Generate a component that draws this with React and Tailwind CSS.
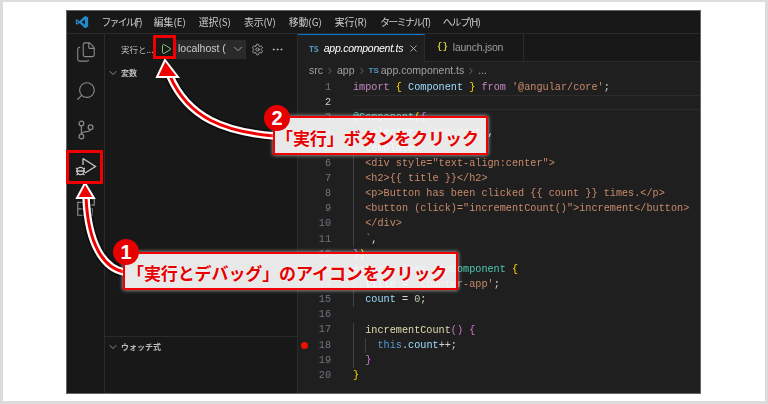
import { Files, Search, Settings, Ellipsis, ChevronDown, ChevronRight, Play, X } from 'lucide-react';

const MENU = [
  ['ファイル(F)', 'tracking-[-1.700px]'],
  ['編集(E)', ''],
  ['選択(S)', ''],
  ['表示(V)', ''],
  ['移動(G)', ''],
  ['実行(R)', ''],
  ['ターミナル(T)', 'tracking-[-1.500px]'],
  ['ヘルプ(H)', 'tracking-[-1.000px]'],
];

const P = 'text-[#c586c0]';
const G = 'text-[#ffd700]';
const V = 'text-[#9cdcfe]';
const B = 'text-[#569cd6]';
const S = 'text-[#c98a6b]';
const F = 'text-[#dcdcaa]';
const W = 'text-[#d4d4d4]';
const C = 'text-[#4ec9b0]';
const N = 'text-[#b5cea8]';
const O = 'text-[#da70d6]';

// n: line number, g: indent guides, t: [class, text] tokens
const CODE = [
  { n: 1, g: 0, t: [[P, 'import'], [W, ' '], [G, '{'], [V, ' Component '], [G, '}'], [P, ' from '], [S, "'@angular/core'"], [W, ';']] },
  { n: 2, g: 0, t: [], active: true },
  { n: 3, g: 0, t: [[C, '@Component'], [G, '('], [O, '{']] },
  { n: 4, g: 1, t: [[V, "selector"], [W, ': '], [S, "'app-root'"], [W, ',']] },
  { n: 5, g: 1, t: [[V, 'template'], [W, ': '], [S, '`']] },
  { n: 6, g: 1, t: [[S, '<div style="text-align:center">']] },
  { n: 7, g: 1, t: [[S, '<h2>{{ title }}</h2>']] },
  { n: 8, g: 1, t: [[S, '<p>Button has been clicked {{ count }} times.</p>']] },
  { n: 9, g: 1, t: [[S, '<button (click)="incrementCount()">increment</button>']] },
  { n: 10, g: 1, t: [[S, '</div>']] },
  { n: 11, g: 1, t: [[S, '`'], [W, ',']] },
  { n: 12, g: 0, t: [[O, '}'], [G, ')']] },
  { n: 13, g: 0, t: [[P, 'export'], [B, ' class '], [C, 'AppComponent '], [G, '{']] },
  { n: 14, g: 1, t: [[V, 'title'], [W, ' = '], [S, "'Counter-app'"], [W, ';']] },
  { n: 15, g: 1, t: [[V, 'count'], [W, ' = '], [N, '0'], [W, ';']] },
  { n: 16, g: 0, t: [] },
  { n: 17, g: 1, t: [[F, 'incrementCount'], [O, '()'], [W, ' '], [O, '{']] },
  { n: 18, g: 2, t: [[B, 'this'], [W, '.'], [V, 'count'], [W, '++;']], bp: true },
  { n: 19, g: 1, t: [[O, '}']] },
  { n: 20, g: 0, t: [[G, '}']] },
];

function VsLogo() {
  return (
    <svg viewBox="0 0 24 24" className="w-[14px] h-[14px] shrink-0" fill="#2489ca">
      <path d="M17 1.500 22.500 4v16L17 22.500 7.500 13.500 3.500 16.700 1.500 15.700V8.300l2-1 4 3.200L17 1.500Zm0 6L11.500 12l5.500 4.500v-9ZM3.500 9.800v4.400L5.700 12 3.500 9.800Z" />
    </svg>
  );
}

function GitIcon() {
  return (
    <svg viewBox="0 0 24 24" className="w-[22px] h-[22px]" fill="none" stroke="#8a8a8a" strokeWidth="1.300">
      <circle cx="7" cy="5" r="2.600" />
      <circle cx="17" cy="9" r="2.600" />
      <circle cx="7" cy="19" r="2.600" />
      <path d="M7 7.600v8.800M17 11.600c0 3-10 1.500-10 4.800" />
    </svg>
  );
}

function RunDebugIcon() {
  return (
    <svg viewBox="0 0 24 24" className="w-[24px] h-[24px]" fill="none" stroke="#c8c8c8" strokeWidth="1.300">
      <path d="M9 3.500 21.500 11.500 11 18" />
      <path d="M9 3.500V10" />
      <circle cx="6.500" cy="16" r="3.600" />
      <path d="M2 13l1.500 1M11 13l-1.500 1M2 16h1M10 16h1M2.500 20l1.500-1M10.500 20 9 19M3 16h7" />
    </svg>
  );
}

function ExtIcon() {
  return (
    <svg viewBox="0 0 24 24" className="w-[22px] h-[22px]" fill="none" stroke="#8a8a8a" strokeWidth="1.300">
      <path d="M3 7h8v14H3zM3 14h16v7h-8M11 7v7M14 3h7v7h-7z" />
    </svg>
  );
}

function TsBadge() {
  return <span className="text-[8px] font-bold text-[#519aba] leading-none">TS</span>;
}

function CodeLine({ line }) {
  return (
    <div className="flex h-[15.16px] items-center">
      <div className="w-[55px] shrink-0 flex items-center pl-[3px]">
        <span className={`w-[7px] h-[7px] rounded-full shrink-0 ${line.bp ? 'bg-[#f01000]' : ''}`} />
        <span className={`flex-1 text-right pr-[22px] ${line.active ? 'text-[#cccccc]' : 'text-[#6e7681]'}`}>{line.n}</span>
      </div>
      {Array.from({ length: line.g }).map((_, i) => (
        <span key={i} className="w-[12.24px] h-full shrink-0 border-l border-[#404040]" />
      ))}
      <div className={`flex-1 h-full whitespace-pre leading-[15.16px] ${line.active ? 'border-y border-[#2b2b2b]' : ''}`}>
        {line.t.map(([cls, text], i) => (
          <span key={i} className={cls}>{text}</span>
        ))}
      </div>
    </div>
  );
}

function Callout({ className, badge, badgeClass, children }) {
  return (
    <div className={`absolute flex items-center bg-white/90 border-2 border-[#f00000] shadow-[0_0_4px_rgba(255,255,255,0.7)] ${className}`}>
      <span className="font-['Noto_Sans_CJK_JP',sans-serif] font-bold text-[17px] tracking-[-0.1px] leading-none text-[#e60000] whitespace-nowrap [text-shadow:0_0_2px_#fff]">
        {children}
      </span>
      <span className={`absolute w-[26px] h-[26px] rounded-full bg-[#e60000] text-white font-['Liberation_Sans',sans-serif] font-bold text-[20px] leading-none flex items-center justify-center ${badgeClass}`}>
        {badge}
      </span>
    </div>
  );
}

function Arrows() {
  const one = 'M124 272C104 268 88 245 86 197';
  const two = 'M275 136C225 132 188 118 170 76';
  return (
    <svg className="absolute inset-0 w-[768px] h-[404px] pointer-events-none" viewBox="0 0 768 404" fill="none">
      {[one, two].map((d) => (
        <g key={d}>
          <path d={d} stroke="#000" strokeOpacity="0.45" strokeWidth="11" />
          <path d={d} stroke="#fff" strokeWidth="7.500" />
          <path d={d} stroke="#ee0000" strokeWidth="3" />
        </g>
      ))}
      <path d="M85 183 94 198H77Z" fill="#ee0000" stroke="#fff" strokeWidth="2" />
      <path d="M165 60 178 77H157Z" fill="#ee0000" stroke="#fff" strokeWidth="2" />
    </svg>
  );
}

export default function App() {
  return (
    <div className="relative w-[768px] h-[404px] overflow-hidden bg-[#dcdcdc] pl-[3px] pr-[3px] pt-[2px] pb-[3px] font-['Liberation_Sans',sans-serif]">
      <div className="w-full h-full bg-white pl-[63px] pt-[8px]">
        <div className="w-[635px] h-[384px] border border-[#666666] bg-[#181818] flex flex-col overflow-hidden blur-[0.45px] font-['Noto_Sans_CJK_JP',sans-serif]">
          {/* title bar */}
          <div className="h-[23px] shrink-0 flex items-center pl-[8px] gap-[12.500px] border-b border-[#2b2b2b]">
            <VsLogo />
            <div className="flex items-center gap-[13px] text-[9.800px] text-[#cccccc]">
              {MENU.map(([label, cls]) => (
                <span key={label} className={`whitespace-nowrap ${cls}`}>{label}</span>
              ))}
            </div>
          </div>

          <div className="flex-1 flex min-h-0">
            {/* activity bar */}
            <div className="relative w-[38px] shrink-0 border-r border-[#2b2b2b] flex flex-col items-center pt-[7px]">
              <Files size={22} strokeWidth={1.2} className="text-[#8a8a8a]" />
              <Search size={22} strokeWidth={1.2} className="text-[#8a8a8a] mt-[17px] -scale-x-100" />
              <div className="mt-[17px]"><GitIcon /></div>
              <div className="mt-[14px]"><RunDebugIcon /></div>
              <div className="mt-[17px]"><ExtIcon /></div>
            </div>

            {/* debug sidebar */}
            <div className="w-[193px] shrink-0 border-r border-[#2b2b2b] flex flex-col text-[#cccccc]">
              <div className="h-[28px] shrink-0 flex items-center pl-[16px] mt-[1px]">
                <span className="w-[33px] text-[8.500px] text-[#bbbbbb] whitespace-nowrap">実行と...</span>
                <Play size={12} strokeWidth={1.8} className="text-[#89d185] ml-[6px] shrink-0" />
                <div className="ml-[4px] w-[70px] h-[19px] bg-[#2a2a2a] flex items-center pl-[2px] shrink-0">
                  <span className="text-[10.500px] font-['Liberation_Sans',sans-serif] whitespace-nowrap">localhost (</span>
                  <ChevronDown size={14} strokeWidth={1.2} className="ml-auto mr-[1px]" />
                </div>
                <Settings size={13} strokeWidth={1.4} className="ml-[5px] shrink-0" />
                <Ellipsis size={13} strokeWidth={1.5} className="ml-[7px] shrink-0" />
              </div>
              <div className="flex items-center h-[18px] pl-[2px] mt-[1px]">
                <ChevronDown size={12} strokeWidth={1.4} className="text-[#bbbbbb]" />
                <span className="ml-[2px] text-[8px] font-bold text-[#bbbbbb]">変数</span>
              </div>
              <div className="flex-1" />
              <div className="h-[57px] shrink-0 border-t border-[#2b2b2b] flex items-start pl-[2px] pt-[1px]">
                <div className="flex items-center h-[18px]">
                  <ChevronDown size={12} strokeWidth={1.4} className="text-[#bbbbbb]" />
                  <span className="ml-[2px] text-[8px] font-bold text-[#bbbbbb]">ウォッチ式</span>
                </div>
              </div>
            </div>

            {/* editor */}
            <div className="flex-1 min-w-0 bg-[#1f1f1f] flex flex-col">
              <div className="h-[28px] shrink-0 flex bg-[#181818] border-b border-[#2b2b2b]">
                <div className="w-[127px] bg-[#1f1f1f] border-t border-[#0078d4] border-r border-r-[#2b2b2b] flex items-center pl-[11px] -mb-px">
                  <TsBadge />
                  <span className="ml-[5px] italic text-[10.500px] tracking-[-0.25px] text-white font-['Liberation_Sans',sans-serif] whitespace-nowrap">app.component.ts</span>
                  <X size={11} strokeWidth={1.6} className="ml-[5px] text-[#cccccc]" />
                </div>
                <div className="w-[99px] border-r border-[#2b2b2b] flex items-center pl-[12px]">
                  <span className="text-[9px] font-bold text-[#cbcb41] font-['Liberation_Mono',monospace]">{'{}'}</span>
                  <span className="ml-[5px] text-[10.500px] tracking-[-0.25px] text-[#9d9d9d] font-['Liberation_Sans',sans-serif]">launch.json</span>
                </div>
              </div>
              <div className="h-[17px] shrink-0 flex items-center pl-[11px] gap-[2px] text-[10.500px] text-[#a0a0a0] font-['Liberation_Sans',sans-serif]">
                <span>src</span>
                <ChevronRight size={10} strokeWidth={1.4} />
                <span>app</span>
                <ChevronRight size={10} strokeWidth={1.4} />
                <TsBadge />
                <span>app.component.ts</span>
                <ChevronRight size={10} strokeWidth={1.4} />
                <span>...</span>
              </div>
              <div className="pt-[1px] font-['Liberation_Mono',monospace] text-[10.200px]">
                {CODE.map((line) => (
                  <CodeLine key={line.n} line={line} />
                ))}
              </div>
            </div>
          </div>
        </div>
      </div>

      {/* annotations */}
      <Arrows />
      <div className="absolute left-[153px] top-[35px] w-[23px] h-[24px] border-[3px] border-[#f00000]" />
      <div className="absolute left-[66px] top-[150px] w-[37px] h-[34px] border-[3px] border-[#f00000]" />
      <Callout className="left-[273px] top-[116px] w-[215px] h-[39px] pt-[3px] pl-[1px]" badge="2" badgeClass="-left-[11px] -top-[13px]">
        「実行」ボタンをクリック
      </Callout>
      <Callout className="left-[123px] top-[252px] w-[335px] h-[38px] pt-[2px] pl-[2px]" badge="1" badgeClass="-left-[12px] -top-[15px]">
        「実行とデバッグ」のアイコンをクリック
      </Callout>
    </div>
  );
}
